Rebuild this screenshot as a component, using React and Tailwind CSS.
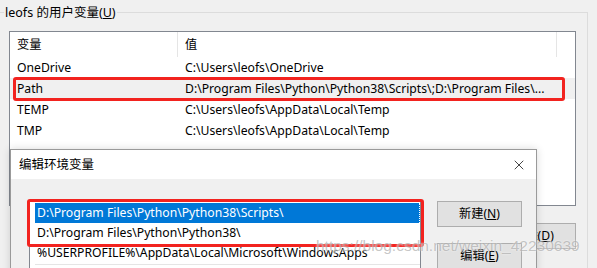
import { X } from 'lucide-react'

const font = { fontFamily: '"Noto Sans", "Noto Sans CJK SC", sans-serif' }

const userVars = [
  { name: 'OneDrive', value: 'C:\\Users\\leofs\\OneDrive' },
  { name: 'Path', value: 'D:\\Program Files\\Python\\Python38\\Scripts\\;D:\\Program Files\\...', active: true },
  { name: 'TEMP', value: 'C:\\Users\\leofs\\AppData\\Local\\Temp' },
  { name: 'TMP', value: 'C:\\Users\\leofs\\AppData\\Local\\Temp' },
]

const pathItems = [
  { text: 'D:\\Program Files\\Python\\Python38\\Scripts\\', selected: true },
  { text: 'D:\\Program Files\\Python\\Python38\\' },
  { text: '%USERPROFILE%\\AppData\\Local\\Microsoft\\WindowsApps' },
]

function WinButton({ label, hotkey, className = '' }) {
  return (
    <div className={`w-[85px] h-[26px] bg-[#e1e1e1] border border-[#adadad] flex items-center justify-center pt-[1px] text-[12.2px] text-black ${className}`}>
      {label}(<span className="underline">{hotkey}</span>)
    </div>
  )
}

export default function App() {
  return (
    <div className="relative w-[597px] h-[268px] bg-[#f0f0f0] overflow-hidden text-black" style={font}>
      {/* 用户变量 group box */}
      <div className="pt-[12px] pr-[9px]">
        <div className="relative h-[300px] border border-l-0 border-[#dcdcdc] pt-[18px] pl-[9px] pr-[11px]">
          <div className="absolute -top-[8px] left-[4px] px-[1px] bg-[#f0f0f0] text-[12.5px] leading-[16px]">
            leofs 的用户变量(<span className="underline">U</span>)
          </div>

          <div className="relative h-[175px] bg-white border border-[#828790] text-[12.2px]">
            {/* header */}
            <div className="flex h-[25px] items-center">
              <div className="w-[168px] h-full pl-[7px] pt-[2px] flex items-center border-r border-[#e5e5e5]">变量</div>
              <div className="w-[379px] h-full pl-[7px] pt-[2px] flex items-center border-r border-[#e5e5e5]">值</div>
            </div>
            {userVars.map((v) => (
              <div key={v.name} className={`flex h-[21px] pt-[2px] items-center ${v.active ? 'bg-[#f0f0f0]' : ''}`}>
                <div className="w-[168px] pl-[7px] whitespace-nowrap">{v.name}</div>
                <div className="pl-[7px] whitespace-nowrap">{v.value}</div>
              </div>
            ))}
            {/* annotation */}
            <div className="absolute left-[3px] top-[45px] w-[552px] h-[24px] border-[3px] border-[#f2231f] rounded-[3px]" />
          </div>

          <div className="flex justify-end mt-[17px]">
            <WinButton label="删除" hotkey="D" />
          </div>
        </div>
      </div>

      {/* 编辑环境变量 dialog */}
      <div className="absolute left-[10px] top-[149px] w-[527px] h-[140px] border border-[#9a9a9a] bg-[#f0f0f0] shadow-[0_0_8px_rgba(0,0,0,0.15)]">
        <div className="h-[29px] bg-white flex items-center justify-between pl-[8px] pr-[9px] pt-[1px] text-[12.5px]">
          <span>编辑环境变量</span>
          <X size={16} strokeWidth={1.1} className="text-black" />
        </div>
        <div className="flex pt-[22px] pl-[18px]">
          <div className="relative w-[392px] h-[100px] bg-white border border-[#828790] pt-[1px] pl-[5px] text-[12.2px]">
            {pathItems.map((p, i) => (
              <div
                key={i}
                className={`h-[20px] flex items-center pl-[2px] pt-[1px] whitespace-nowrap ${p.selected ? 'bg-[#0078d7] text-white border-r border-dotted border-white' : ''}`}
              >
                {p.text}
              </div>
            ))}
            <div className="h-[1px] mt-[1px] bg-[#e5e5e5]" />
            <div className="absolute -left-[3px] -top-[3px] w-[397px] h-[48px] border-[3px] border-[#f2231f] rounded-[3px]" />
          </div>
          <div className="flex flex-col gap-[16px] ml-[16px]">
            <WinButton label="新建" hotkey="N" />
            <WinButton label="编辑" hotkey="E" />
          </div>
        </div>
      </div>

      {/* watermark */}
      <div className="absolute left-[316px] top-[234px] text-[15.5px] whitespace-nowrap text-[rgba(150,150,150,0.55)] [text-shadow:0_0_2px_rgba(255,255,255,0.9)]" style={{ fontFamily: '"Liberation Sans", sans-serif' }}>
        https://blog.csdn.net/weixin_42230639
      </div>
    </div>
  )
}
